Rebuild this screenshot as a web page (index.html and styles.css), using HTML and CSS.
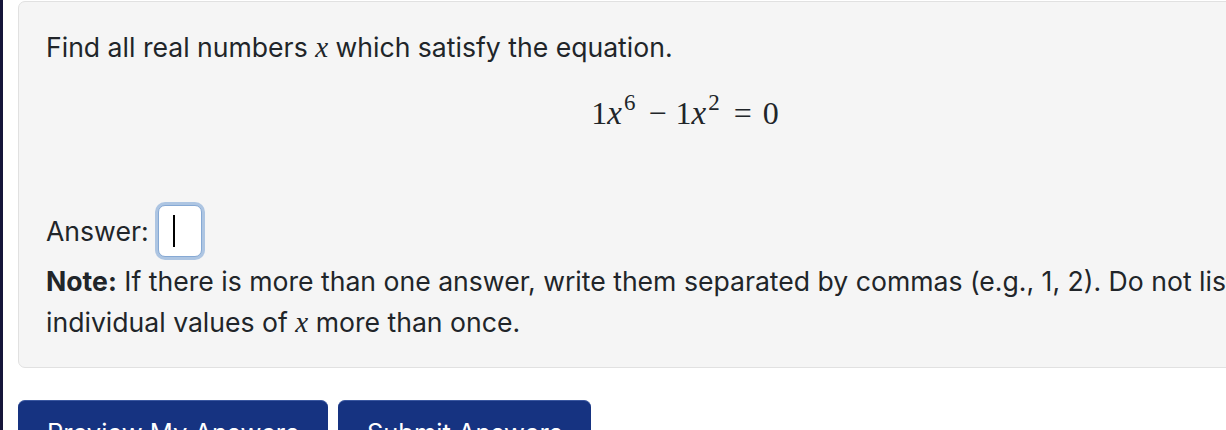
FILE: index.html
```html
<!DOCTYPE html>
<html lang="en">

<head>
    <meta charset="utf-8">
    <meta name="viewport" content="width=device-width, initial-scale=1.0">
    <title>Problem</title>
    <link rel="stylesheet" href="styles.css">
</head>

<body>

    <div id="side"></div>

    <main id="problem">
        <div class="well">
            <p class="intro">Find all real numbers <span class="mi">x</span> which satisfy the equation.</p>

            <div class="display">
                <span class="mn">1</span><span class="mi">x</span><sup>6</sup><span class="mo">&minus;</span><span class="mn">1</span><span class="mi">x</span><sup>2</sup><span class="mr">=</span><span class="mn">0</span>
            </div>

            <p class="answer">
                Answer:
                <span class="answer-box"><span class="caret"></span></span>
            </p>

            <p class="note"><b>Note:</b> If there is more than one answer, write them separated by commas (e.g., 1, 2). Do not list individual values of <span class="mi">x</span> more than once.</p>
        </div>

        <div class="knapper">
            <button class="btn">Preview My Answers</button>
            <button class="btn">Submit Answers</button>
        </div>
    </main>

</body>

</html>
```

FILE: styles.css
```css
        body {
            margin: 0;
            padding: 0;
            background-color: white;
            font-family: Inter, "Liberation Sans", Arial, sans-serif;
            font-size: 26.6px;
            line-height: 41px;
            color: #212529;
            overflow: hidden;
        }

        #side {
            position: fixed;
            top: 0;
            left: 0;
            width: 3px;
            height: 100%;
            background-color: #15163a;
        }

        #problem {
            padding-left: 18px;
            padding-top: 1px;
        }

        .well {
            width: 1334px;
            box-sizing: border-box;
            padding: 25px 27px 24px 27px;
            background-color: #f5f5f5;
            border: 1px solid #e1e1e1;
            border-radius: 7px;
        }

        .well p {
            margin: 0;
        }

        .mi {
            font-family: "Liberation Serif", "DejaVu Serif", serif;
            font-style: italic;
            font-size: 29px;
        }

        .display {
            text-align: center;
            font-family: "Liberation Serif", "DejaVu Serif", serif;
            font-size: 32px;
            margin: 25px 0 71px 0;
        }

        .display .mi {
            font-size: 33px;
            padding-right: 2px;
        }

        .display sup {
            font-size: 23px;
            vertical-align: 14px;
            line-height: 0;
        }

        .mo {
            margin: 0 9px 0 13px;
        }

        .mr {
            margin: 0 11px 0 14px;
        }

        .answer {
            display: flex;
            align-items: center;
            gap: 9px;
        }

        .answer-box {
            display: inline-block;
            width: 44px;
            height: 52px;
            box-sizing: border-box;
            border: 1px solid #86a9d4;
            border-radius: 7px;
            background-color: white;
            box-shadow: 0 0 0 3px rgba(86, 140, 204, 0.45);
            position: relative;
        }

        .caret {
            position: absolute;
            left: 14px;
            top: 9px;
            width: 2px;
            height: 32px;
            background-color: black;
        }

        .note {
            margin-top: 4px !important;
        }

        .knapper {
            display: flex;
            gap: 10px;
            margin-top: 32px;
        }

        .btn {
            font-family: Inter, "Liberation Sans", Arial, sans-serif;
            font-size: 25.5px;
            color: white;
            background-color: #163381;
            border: none;
            border-top: 1px solid #3a57a0;
            border-radius: 7px;
            padding: 16px 29px 20px 29px;
        }
```
